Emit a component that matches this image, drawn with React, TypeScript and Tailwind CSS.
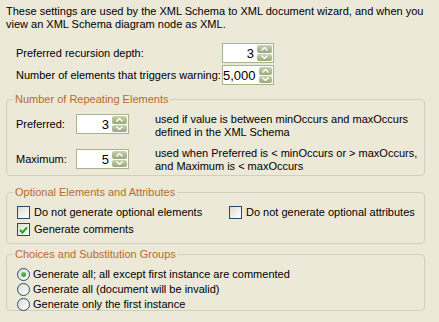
import React from 'react';

const Spin = ({ value, width = 'w-[52px]' }: { value: string; width?: string }) => (
    <div className={`flex h-[20px] ${width} border border-[#A5B48A] bg-white`}>
        <div className="flex-1 flex items-center justify-end pr-[3px] text-[13px] leading-none">{value}</div>
        <div className="flex flex-col w-[16px] py-[1px] pr-[1px] gap-[1px]">
            {['up', 'down'].map((dir) => (
                <div
                    key={dir}
                    className="flex-1 flex items-center justify-center rounded-[2px] bg-gradient-to-b from-[#C9D3B0] to-[#98A67D]"
                >
                    <svg width="7" height="4" viewBox="0 0 7 4">
                        {dir === 'up' ? (
                            <path d="M0.5 3.5 L3.5 0.5 L6.5 3.5" fill="none" stroke="#fff" strokeWidth="1.4" />
                        ) : (
                            <path d="M0.5 0.5 L3.5 3.5 L6.5 0.5" fill="none" stroke="#fff" strokeWidth="1.4" />
                        )}
                    </svg>
                </div>
            ))}
        </div>
    </div>
);

const Checkbox = ({ checked, label }: { checked?: boolean; label: string }) => (
    <div className="flex items-center gap-[4px] h-[17px]">
        <span className="w-[13px] h-[13px] border border-[#2C4A66] bg-gradient-to-br from-[#DCDCD5] to-white flex items-center justify-center">
            {checked && (
                <svg width="9" height="8" viewBox="0 0 9 8">
                    <path d="M1 4 L3.5 6.5 L8 1.5" fill="none" stroke="#21A121" strokeWidth="2" />
                </svg>
            )}
        </span>
        <span>{label}</span>
    </div>
);

const Radio = ({ checked, label }: { checked?: boolean; label: string }) => (
    <div className="flex items-center gap-[3px] h-[15px]">
        <span className="w-[13px] h-[13px] rounded-full border border-[#2C4A66] bg-gradient-to-br from-[#DCDCD5] to-white flex items-center justify-center">
            {checked && <span className="w-[5px] h-[5px] rounded-full bg-gradient-to-br from-[#6FD56F] to-[#1E8F1E]" />}
        </span>
        <span>{label}</span>
    </div>
);

const Group = ({ title, className, children }: { title: string; className?: string; children: React.ReactNode }) => (
    <fieldset className={`ml-[6px] mr-[14px] border border-[#D0D0BF] rounded-[4px] ${className ?? ''}`}>
        <legend className="ml-[6px] px-[2px] text-[#B8692A]">{title}</legend>
        {children}
    </fieldset>
);

export default function App() {
    return (
        <div
            className="w-[439px] h-[322px] bg-[#ECE9D8] text-black text-[11px] leading-[13px] overflow-hidden"
            style={{ fontFamily: '"Liberation Sans", Arial, sans-serif' }}
        >
            <p className="pl-[6px] pt-[5px]">
                These settings are used by the XML Schema to XML document wizard, and when you
                <br />
                view an XML Schema diagram node as XML.
            </p>

            {/* Top settings */}
            <div className="mt-[12px] pl-[16px] flex flex-col gap-[2px]">
                <div className="flex items-center h-[20px]">
                    <span className="w-[206px]">Preferred recursion depth:</span>
                    <Spin value="3" />
                </div>
                <div className="flex items-center h-[20px]">
                    <span className="w-[206px]">Number of elements that triggers warning:</span>
                    <Spin value="5,000" />
                </div>
            </div>

            <Group title="Number of Repeating Elements" className="mt-[8px] h-[83px]">
                <div className="pl-[9px] pt-[8px] flex flex-col gap-[10px]">
                    <div className="flex items-start">
                        <span className="w-[60px] h-[20px] flex items-center">Preferred:</span>
                        <Spin value="3" width="w-[53px]" />
                        <div className="ml-[26px] mt-[-1px]">
                            used if value is between minOccurs and maxOccurs
                            <br />
                            defined in the XML Schema
                        </div>
                    </div>
                    <div className="flex items-start">
                        <span className="w-[60px] h-[20px] flex items-center">Maximum:</span>
                        <Spin value="5" width="w-[53px]" />
                        <div className="ml-[26px] mt-[-2px]">
                            used when Preferred is &lt; minOccurs or &gt; maxOccurs,
                            <br />
                            and Maximum is &lt; maxOccurs
                        </div>
                    </div>
                </div>
            </Group>

            <Group title="Optional Elements and Attributes" className="mt-[10px] h-[58px]">
                <div className="pl-[10px] pt-[5px] grid grid-cols-[212px_1fr]">
                    <Checkbox label="Do not generate optional elements" />
                    <Checkbox label="Do not generate optional attributes" />
                    <Checkbox checked label="Generate comments" />
                </div>
            </Group>

            <Group title="Choices and Substitution Groups" className="mt-[4px] h-[63px]">
                <div className="pl-[10px] pt-[6px] flex flex-col">
                    <Radio checked label="Generate all; all except first instance are commented" />
                    <Radio label="Generate all (document will be invalid)" />
                    <Radio label="Generate only the first instance" />
                </div>
            </Group>
        </div>
    );
}
